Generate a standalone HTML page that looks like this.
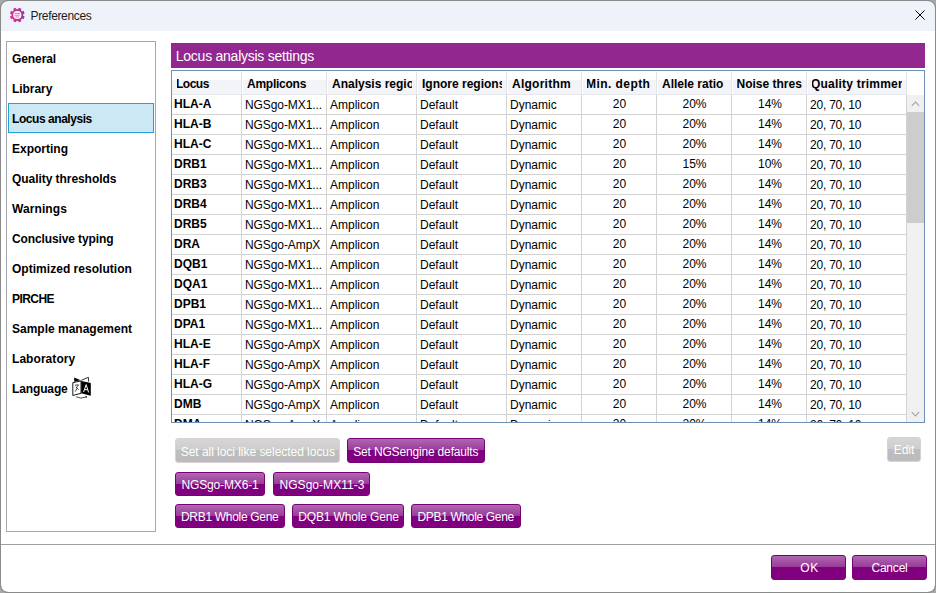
<!DOCTYPE html>
<html><head><meta charset="utf-8"><style>
html,body{margin:0;padding:0;}
body{width:936px;height:593px;position:relative;overflow:hidden;background:#a8a8a8;font-family:"Liberation Sans", sans-serif;}
.win{position:absolute;left:0;top:0;width:936px;height:593px;box-sizing:border-box;border:1px solid #8a8a8a;border-radius:8px;background:#fff;overflow:hidden;}
.abs{position:absolute;box-sizing:border-box;}
.t{position:absolute;white-space:nowrap;font-family:"Liberation Sans", sans-serif;}
.btn{position:absolute;box-sizing:border-box;border:1px solid #780078;border-radius:3px;overflow:hidden;}
</style></head><body>
<div class="win">
</div>
<div class="abs" style="left:0;top:0;width:936px;height:593px;">
<div class="abs" style="left:1px;top:1px;width:934px;height:30px;background:#eef2f9;border-radius:7px 7px 0 0;"></div>
<svg class="abs" style="left:0px;top:0px" width="40" height="31" viewBox="0 0 40 31">
<defs><linearGradient id="g1" gradientUnits="userSpaceOnUse" x1="10" y1="0" x2="25" y2="0"><stop offset="0" stop-color="#e62e96"/><stop offset="0.5" stop-color="#c8309a"/><stop offset="1" stop-color="#8e3c9e"/></linearGradient></defs>
<path d="M17.30 9.10 L18.07 9.15 L18.80 7.65 L21.44 8.75 L20.89 10.32 L21.47 10.83 L21.98 11.41 L23.55 10.86 L24.65 13.50 L23.15 14.23 L23.20 15.00 L23.15 15.77 L24.65 16.50 L23.55 19.14 L21.98 18.59 L21.47 19.17 L20.89 19.68 L21.44 21.25 L18.80 22.35 L18.07 20.85 L17.30 20.90 L16.53 20.85 L15.80 22.35 L13.16 21.25 L13.71 19.68 L13.13 19.17 L12.62 18.59 L11.05 19.14 L9.95 16.50 L11.45 15.77 L11.40 15.00 L11.45 14.23 L9.95 13.50 L11.05 10.86 L12.62 11.41 L13.13 10.83 L13.71 10.32 L13.16 8.75 L15.80 7.65 L16.53 9.15 Z" fill="url(#g1)"/>
<circle cx="17.3" cy="15.0" r="4.1" fill="#fff"/>
<path d="M14.6 13.4 h2.6 M14.6 15.2 h5.2 M15.4 17 h3.6" stroke="#e070b8" stroke-width="1"/>
<path d="M17.6 13.4 h2" stroke="#b04aa8" stroke-width="1"/>
</svg>
<div class="t" style="left:30.6px;top:9px;font-size:12px;line-height:14px;font-weight:400;color:#1c1c1c;letter-spacing:-0.36px;">Preferences</div>
<svg class="abs" style="left:915px;top:10px" width="10" height="10" viewBox="0 0 10 10"><path d="M0.5 0.5L9.5 9.5M9.5 0.5L0.5 9.5" stroke="#000" stroke-width="1"/></svg>
<div class="abs" style="left:6px;top:41px;width:150px;height:491px;border:1px solid #a5a8ae;background:#fff;"></div>
<div class="abs" style="left:8px;top:103px;width:146px;height:30px;border:1px solid #26a0da;background:#cce8f5;"></div>
<div class="t" style="left:12px;top:52px;font-size:12px;line-height:14px;font-weight:700;color:#000;letter-spacing:-0.092px;">General</div>
<div class="t" style="left:12px;top:82px;font-size:12px;line-height:14px;font-weight:700;color:#000;letter-spacing:-0.051px;">Library</div>
<div class="t" style="left:12px;top:112px;font-size:12px;line-height:14px;font-weight:700;color:#000;letter-spacing:-0.443px;">Locus analysis</div>
<div class="t" style="left:12px;top:142px;font-size:12px;line-height:14px;font-weight:700;color:#000;letter-spacing:0.004px;">Exporting</div>
<div class="t" style="left:12px;top:172px;font-size:12px;line-height:14px;font-weight:700;color:#000;letter-spacing:-0.057px;">Quality thresholds</div>
<div class="t" style="left:12px;top:202px;font-size:12px;line-height:14px;font-weight:700;color:#000;letter-spacing:0.093px;">Warnings</div>
<div class="t" style="left:12px;top:232px;font-size:12px;line-height:14px;font-weight:700;color:#000;letter-spacing:-0.114px;">Conclusive typing</div>
<div class="t" style="left:12px;top:262px;font-size:12px;line-height:14px;font-weight:700;color:#000;letter-spacing:0.026px;">Optimized resolution</div>
<div class="t" style="left:12px;top:292px;font-size:12px;line-height:14px;font-weight:700;color:#000;letter-spacing:-0.567px;">PIRCHE</div>
<div class="t" style="left:12px;top:322px;font-size:12px;line-height:14px;font-weight:700;color:#000;letter-spacing:-0.003px;">Sample management</div>
<div class="t" style="left:12px;top:352px;font-size:12px;line-height:14px;font-weight:700;color:#000;letter-spacing:0.055px;">Laboratory</div>
<div class="t" style="left:12px;top:382px;font-size:12px;line-height:14px;font-weight:700;color:#000;letter-spacing:-0.131px;">Language</div>
<svg class="abs" style="left:70px;top:375px" width="24" height="26" viewBox="70 375 24 26">
<path d="M74.2 377.6 L80.6 380.2 L74.2 381.8 Z" fill="#000"/>
<path d="M81.3 380.3 L88.4 377.3 L88.6 381.6" fill="none" stroke="#000" stroke-width="0.8"/>
<path d="M72.8 382.6 L81 380.9 L81 393.3 L72.8 395.5 Z" fill="#fff" stroke="#000" stroke-width="0.9"/>
<path d="M81.2 380.9 L90.8 382.9 L90.8 395.8 L81.2 393.3 Z" fill="#000"/>
<path d="M75 385.2 L78.6 384.8 L76 388.2 M75.8 386.8 L78.8 389.6 M77 388.4 L75.2 391.6" fill="none" stroke="#000" stroke-width="0.7"/>
<path d="M83.6 392 L86.2 384.6 L88.6 392.4 M84.6 389.6 L87.6 389.8" fill="none" stroke="#fff" stroke-width="1"/>
<path d="M76.2 396.8 Q81 399.4 86.4 396.8" fill="none" stroke="#000" stroke-width="0.7"/>
<path d="M85.2 396.4 L87.2 396.2 L86.4 398" fill="#000"/>
</svg>
<div class="abs" style="left:171px;top:43px;width:754px;height:25px;background:#91278f;"></div>
<div class="t" style="left:175.8px;top:48px;font-size:14px;line-height:16px;font-weight:400;color:#fff;letter-spacing:-0.25px;">Locus analysis settings</div>
<div class="abs" style="left:171px;top:70px;width:754px;height:353px;border:1px solid #6d8fb6;background:#fff;overflow:hidden;"></div>
<div class="abs" style="left:172px;top:71px;width:735px;height:9px;background:#fff;"></div>
<div class="abs" style="left:172px;top:80px;width:735px;height:14px;background:#f3f4f7;"></div>
<div class="abs" style="left:172px;top:94px;width:735px;height:1px;background:#e6e7ea;"></div>
<div class="abs" style="left:241px;top:72px;width:1px;height:22px;background:#e2e3e6;"></div>
<div class="abs" style="left:242px;top:72px;width:1px;height:22px;background:#fff;"></div>
<div class="abs" style="left:326px;top:72px;width:1px;height:22px;background:#e2e3e6;"></div>
<div class="abs" style="left:327px;top:72px;width:1px;height:22px;background:#fff;"></div>
<div class="abs" style="left:416px;top:72px;width:1px;height:22px;background:#e2e3e6;"></div>
<div class="abs" style="left:417px;top:72px;width:1px;height:22px;background:#fff;"></div>
<div class="abs" style="left:506px;top:72px;width:1px;height:22px;background:#e2e3e6;"></div>
<div class="abs" style="left:507px;top:72px;width:1px;height:22px;background:#fff;"></div>
<div class="abs" style="left:581px;top:72px;width:1px;height:22px;background:#e2e3e6;"></div>
<div class="abs" style="left:582px;top:72px;width:1px;height:22px;background:#fff;"></div>
<div class="abs" style="left:656px;top:72px;width:1px;height:22px;background:#e2e3e6;"></div>
<div class="abs" style="left:657px;top:72px;width:1px;height:22px;background:#fff;"></div>
<div class="abs" style="left:731px;top:72px;width:1px;height:22px;background:#e2e3e6;"></div>
<div class="abs" style="left:732px;top:72px;width:1px;height:22px;background:#fff;"></div>
<div class="abs" style="left:806px;top:72px;width:1px;height:22px;background:#e2e3e6;"></div>
<div class="abs" style="left:807px;top:72px;width:1px;height:22px;background:#fff;"></div>
<div class="abs" style="left:906px;top:72px;width:1px;height:22px;background:#e2e3e6;"></div>
<div class="abs" style="left:177px;top:71px;width:60px;height:23px;overflow:hidden;"><div class="t" style="left:-1px;top:6px;font-size:12px;line-height:14px;font-weight:700;color:#000;letter-spacing:-0.5px;">Locus</div>
</div>
<div class="abs" style="left:247px;top:71px;width:75px;height:23px;overflow:hidden;"><div class="t" style="left:0px;top:6px;font-size:12px;line-height:14px;font-weight:700;color:#000;letter-spacing:-0.25px;">Amplicons</div>
</div>
<div class="abs" style="left:332px;top:71px;width:80px;height:23px;overflow:hidden;"><div class="t" style="left:0px;top:6px;font-size:12px;line-height:14px;font-weight:700;color:#000;letter-spacing:0px;">Analysis regions</div>
</div>
<div class="abs" style="left:422px;top:71px;width:80px;height:23px;overflow:hidden;"><div class="t" style="left:0px;top:6px;font-size:12px;line-height:14px;font-weight:700;color:#000;letter-spacing:0px;">Ignore regions</div>
</div>
<div class="abs" style="left:512px;top:71px;width:65px;height:23px;overflow:hidden;"><div class="t" style="left:0px;top:6px;font-size:12px;line-height:14px;font-weight:700;color:#000;letter-spacing:0.25px;">Algorithm</div>
</div>
<div class="abs" style="left:587px;top:71px;width:65px;height:23px;overflow:hidden;"><div class="t" style="left:-1px;top:6px;font-size:12px;line-height:14px;font-weight:700;color:#000;letter-spacing:0.44px;">Min. depth</div>
</div>
<div class="abs" style="left:662px;top:71px;width:65px;height:23px;overflow:hidden;"><div class="t" style="left:0px;top:6px;font-size:12px;line-height:14px;font-weight:700;color:#000;letter-spacing:0px;">Allele ratio</div>
</div>
<div class="abs" style="left:737px;top:71px;width:65px;height:23px;overflow:hidden;"><div class="t" style="left:-0.5px;top:6px;font-size:12px;line-height:14px;font-weight:700;color:#000;letter-spacing:0px;">Noise threshold</div>
</div>
<div class="abs" style="left:812px;top:71px;width:90px;height:23px;overflow:hidden;"><div class="t" style="left:-1px;top:6px;font-size:12px;line-height:14px;font-weight:700;color:#000;letter-spacing:0.21px;">Quality trimmer</div>
</div>
<div class="abs" style="left:172px;top:95px;width:735px;height:327px;overflow:hidden;">
<div class="abs" style="left:0;top:19px;width:735px;height:1px;background:#d3d3d3;"></div>
<div class="t" style="left:2px;top:2px;font-size:12px;line-height:14px;font-weight:700;color:#000;">HLA-A</div>
<div class="t" style="left:73px;top:3px;font-size:12px;line-height:14px;font-weight:400;color:#000;letter-spacing:-0.09px;">NGSgo-MX1...</div>
<div class="t" style="left:158px;top:3px;font-size:12px;line-height:14px;font-weight:400;color:#000;">Amplicon</div>
<div class="t" style="left:248px;top:3px;font-size:12px;line-height:14px;font-weight:400;color:#000;">Default</div>
<div class="t" style="left:338px;top:3px;font-size:12px;line-height:14px;font-weight:400;color:#000;">Dynamic</div>
<div class="t" style="left:410.5px;top:2px;width:74px;text-align:center;font-size:12px;line-height:14px;">20</div>
<div class="t" style="left:485.5px;top:2px;width:74px;text-align:center;font-size:12px;line-height:14px;">20%</div>
<div class="t" style="left:561px;top:2px;width:74px;text-align:center;font-size:12px;line-height:14px;">14%</div>
<div class="t" style="left:638px;top:3px;font-size:12px;line-height:14px;font-weight:400;color:#000;letter-spacing:-0.22px;">20, 70, 10</div>
<div class="abs" style="left:0;top:39px;width:735px;height:1px;background:#d3d3d3;"></div>
<div class="t" style="left:2px;top:22px;font-size:12px;line-height:14px;font-weight:700;color:#000;">HLA-B</div>
<div class="t" style="left:73px;top:23px;font-size:12px;line-height:14px;font-weight:400;color:#000;letter-spacing:-0.09px;">NGSgo-MX1...</div>
<div class="t" style="left:158px;top:23px;font-size:12px;line-height:14px;font-weight:400;color:#000;">Amplicon</div>
<div class="t" style="left:248px;top:23px;font-size:12px;line-height:14px;font-weight:400;color:#000;">Default</div>
<div class="t" style="left:338px;top:23px;font-size:12px;line-height:14px;font-weight:400;color:#000;">Dynamic</div>
<div class="t" style="left:410.5px;top:22px;width:74px;text-align:center;font-size:12px;line-height:14px;">20</div>
<div class="t" style="left:485.5px;top:22px;width:74px;text-align:center;font-size:12px;line-height:14px;">20%</div>
<div class="t" style="left:561px;top:22px;width:74px;text-align:center;font-size:12px;line-height:14px;">14%</div>
<div class="t" style="left:638px;top:23px;font-size:12px;line-height:14px;font-weight:400;color:#000;letter-spacing:-0.22px;">20, 70, 10</div>
<div class="abs" style="left:0;top:59px;width:735px;height:1px;background:#d3d3d3;"></div>
<div class="t" style="left:2px;top:42px;font-size:12px;line-height:14px;font-weight:700;color:#000;">HLA-C</div>
<div class="t" style="left:73px;top:43px;font-size:12px;line-height:14px;font-weight:400;color:#000;letter-spacing:-0.09px;">NGSgo-MX1...</div>
<div class="t" style="left:158px;top:43px;font-size:12px;line-height:14px;font-weight:400;color:#000;">Amplicon</div>
<div class="t" style="left:248px;top:43px;font-size:12px;line-height:14px;font-weight:400;color:#000;">Default</div>
<div class="t" style="left:338px;top:43px;font-size:12px;line-height:14px;font-weight:400;color:#000;">Dynamic</div>
<div class="t" style="left:410.5px;top:42px;width:74px;text-align:center;font-size:12px;line-height:14px;">20</div>
<div class="t" style="left:485.5px;top:42px;width:74px;text-align:center;font-size:12px;line-height:14px;">20%</div>
<div class="t" style="left:561px;top:42px;width:74px;text-align:center;font-size:12px;line-height:14px;">14%</div>
<div class="t" style="left:638px;top:43px;font-size:12px;line-height:14px;font-weight:400;color:#000;letter-spacing:-0.22px;">20, 70, 10</div>
<div class="abs" style="left:0;top:79px;width:735px;height:1px;background:#d3d3d3;"></div>
<div class="t" style="left:2px;top:62px;font-size:12px;line-height:14px;font-weight:700;color:#000;">DRB1</div>
<div class="t" style="left:73px;top:63px;font-size:12px;line-height:14px;font-weight:400;color:#000;letter-spacing:-0.09px;">NGSgo-MX1...</div>
<div class="t" style="left:158px;top:63px;font-size:12px;line-height:14px;font-weight:400;color:#000;">Amplicon</div>
<div class="t" style="left:248px;top:63px;font-size:12px;line-height:14px;font-weight:400;color:#000;">Default</div>
<div class="t" style="left:338px;top:63px;font-size:12px;line-height:14px;font-weight:400;color:#000;">Dynamic</div>
<div class="t" style="left:410.5px;top:62px;width:74px;text-align:center;font-size:12px;line-height:14px;">20</div>
<div class="t" style="left:485.5px;top:62px;width:74px;text-align:center;font-size:12px;line-height:14px;">15%</div>
<div class="t" style="left:561px;top:62px;width:74px;text-align:center;font-size:12px;line-height:14px;">10%</div>
<div class="t" style="left:638px;top:63px;font-size:12px;line-height:14px;font-weight:400;color:#000;letter-spacing:-0.22px;">20, 70, 10</div>
<div class="abs" style="left:0;top:99px;width:735px;height:1px;background:#d3d3d3;"></div>
<div class="t" style="left:2px;top:82px;font-size:12px;line-height:14px;font-weight:700;color:#000;">DRB3</div>
<div class="t" style="left:73px;top:83px;font-size:12px;line-height:14px;font-weight:400;color:#000;letter-spacing:-0.09px;">NGSgo-MX1...</div>
<div class="t" style="left:158px;top:83px;font-size:12px;line-height:14px;font-weight:400;color:#000;">Amplicon</div>
<div class="t" style="left:248px;top:83px;font-size:12px;line-height:14px;font-weight:400;color:#000;">Default</div>
<div class="t" style="left:338px;top:83px;font-size:12px;line-height:14px;font-weight:400;color:#000;">Dynamic</div>
<div class="t" style="left:410.5px;top:82px;width:74px;text-align:center;font-size:12px;line-height:14px;">20</div>
<div class="t" style="left:485.5px;top:82px;width:74px;text-align:center;font-size:12px;line-height:14px;">20%</div>
<div class="t" style="left:561px;top:82px;width:74px;text-align:center;font-size:12px;line-height:14px;">14%</div>
<div class="t" style="left:638px;top:83px;font-size:12px;line-height:14px;font-weight:400;color:#000;letter-spacing:-0.22px;">20, 70, 10</div>
<div class="abs" style="left:0;top:119px;width:735px;height:1px;background:#d3d3d3;"></div>
<div class="t" style="left:2px;top:102px;font-size:12px;line-height:14px;font-weight:700;color:#000;">DRB4</div>
<div class="t" style="left:73px;top:103px;font-size:12px;line-height:14px;font-weight:400;color:#000;letter-spacing:-0.09px;">NGSgo-MX1...</div>
<div class="t" style="left:158px;top:103px;font-size:12px;line-height:14px;font-weight:400;color:#000;">Amplicon</div>
<div class="t" style="left:248px;top:103px;font-size:12px;line-height:14px;font-weight:400;color:#000;">Default</div>
<div class="t" style="left:338px;top:103px;font-size:12px;line-height:14px;font-weight:400;color:#000;">Dynamic</div>
<div class="t" style="left:410.5px;top:102px;width:74px;text-align:center;font-size:12px;line-height:14px;">20</div>
<div class="t" style="left:485.5px;top:102px;width:74px;text-align:center;font-size:12px;line-height:14px;">20%</div>
<div class="t" style="left:561px;top:102px;width:74px;text-align:center;font-size:12px;line-height:14px;">14%</div>
<div class="t" style="left:638px;top:103px;font-size:12px;line-height:14px;font-weight:400;color:#000;letter-spacing:-0.22px;">20, 70, 10</div>
<div class="abs" style="left:0;top:139px;width:735px;height:1px;background:#d3d3d3;"></div>
<div class="t" style="left:2px;top:122px;font-size:12px;line-height:14px;font-weight:700;color:#000;">DRB5</div>
<div class="t" style="left:73px;top:123px;font-size:12px;line-height:14px;font-weight:400;color:#000;letter-spacing:-0.09px;">NGSgo-MX1...</div>
<div class="t" style="left:158px;top:123px;font-size:12px;line-height:14px;font-weight:400;color:#000;">Amplicon</div>
<div class="t" style="left:248px;top:123px;font-size:12px;line-height:14px;font-weight:400;color:#000;">Default</div>
<div class="t" style="left:338px;top:123px;font-size:12px;line-height:14px;font-weight:400;color:#000;">Dynamic</div>
<div class="t" style="left:410.5px;top:122px;width:74px;text-align:center;font-size:12px;line-height:14px;">20</div>
<div class="t" style="left:485.5px;top:122px;width:74px;text-align:center;font-size:12px;line-height:14px;">20%</div>
<div class="t" style="left:561px;top:122px;width:74px;text-align:center;font-size:12px;line-height:14px;">14%</div>
<div class="t" style="left:638px;top:123px;font-size:12px;line-height:14px;font-weight:400;color:#000;letter-spacing:-0.22px;">20, 70, 10</div>
<div class="abs" style="left:0;top:159px;width:735px;height:1px;background:#d3d3d3;"></div>
<div class="t" style="left:2px;top:142px;font-size:12px;line-height:14px;font-weight:700;color:#000;">DRA</div>
<div class="t" style="left:73px;top:143px;font-size:12px;line-height:14px;font-weight:400;color:#000;letter-spacing:-0.09px;">NGSgo-AmpX</div>
<div class="t" style="left:158px;top:143px;font-size:12px;line-height:14px;font-weight:400;color:#000;">Amplicon</div>
<div class="t" style="left:248px;top:143px;font-size:12px;line-height:14px;font-weight:400;color:#000;">Default</div>
<div class="t" style="left:338px;top:143px;font-size:12px;line-height:14px;font-weight:400;color:#000;">Dynamic</div>
<div class="t" style="left:410.5px;top:142px;width:74px;text-align:center;font-size:12px;line-height:14px;">20</div>
<div class="t" style="left:485.5px;top:142px;width:74px;text-align:center;font-size:12px;line-height:14px;">20%</div>
<div class="t" style="left:561px;top:142px;width:74px;text-align:center;font-size:12px;line-height:14px;">14%</div>
<div class="t" style="left:638px;top:143px;font-size:12px;line-height:14px;font-weight:400;color:#000;letter-spacing:-0.22px;">20, 70, 10</div>
<div class="abs" style="left:0;top:179px;width:735px;height:1px;background:#d3d3d3;"></div>
<div class="t" style="left:2px;top:162px;font-size:12px;line-height:14px;font-weight:700;color:#000;">DQB1</div>
<div class="t" style="left:73px;top:163px;font-size:12px;line-height:14px;font-weight:400;color:#000;letter-spacing:-0.09px;">NGSgo-MX1...</div>
<div class="t" style="left:158px;top:163px;font-size:12px;line-height:14px;font-weight:400;color:#000;">Amplicon</div>
<div class="t" style="left:248px;top:163px;font-size:12px;line-height:14px;font-weight:400;color:#000;">Default</div>
<div class="t" style="left:338px;top:163px;font-size:12px;line-height:14px;font-weight:400;color:#000;">Dynamic</div>
<div class="t" style="left:410.5px;top:162px;width:74px;text-align:center;font-size:12px;line-height:14px;">20</div>
<div class="t" style="left:485.5px;top:162px;width:74px;text-align:center;font-size:12px;line-height:14px;">20%</div>
<div class="t" style="left:561px;top:162px;width:74px;text-align:center;font-size:12px;line-height:14px;">14%</div>
<div class="t" style="left:638px;top:163px;font-size:12px;line-height:14px;font-weight:400;color:#000;letter-spacing:-0.22px;">20, 70, 10</div>
<div class="abs" style="left:0;top:199px;width:735px;height:1px;background:#d3d3d3;"></div>
<div class="t" style="left:2px;top:182px;font-size:12px;line-height:14px;font-weight:700;color:#000;">DQA1</div>
<div class="t" style="left:73px;top:183px;font-size:12px;line-height:14px;font-weight:400;color:#000;letter-spacing:-0.09px;">NGSgo-MX1...</div>
<div class="t" style="left:158px;top:183px;font-size:12px;line-height:14px;font-weight:400;color:#000;">Amplicon</div>
<div class="t" style="left:248px;top:183px;font-size:12px;line-height:14px;font-weight:400;color:#000;">Default</div>
<div class="t" style="left:338px;top:183px;font-size:12px;line-height:14px;font-weight:400;color:#000;">Dynamic</div>
<div class="t" style="left:410.5px;top:182px;width:74px;text-align:center;font-size:12px;line-height:14px;">20</div>
<div class="t" style="left:485.5px;top:182px;width:74px;text-align:center;font-size:12px;line-height:14px;">20%</div>
<div class="t" style="left:561px;top:182px;width:74px;text-align:center;font-size:12px;line-height:14px;">14%</div>
<div class="t" style="left:638px;top:183px;font-size:12px;line-height:14px;font-weight:400;color:#000;letter-spacing:-0.22px;">20, 70, 10</div>
<div class="abs" style="left:0;top:219px;width:735px;height:1px;background:#d3d3d3;"></div>
<div class="t" style="left:2px;top:202px;font-size:12px;line-height:14px;font-weight:700;color:#000;">DPB1</div>
<div class="t" style="left:73px;top:203px;font-size:12px;line-height:14px;font-weight:400;color:#000;letter-spacing:-0.09px;">NGSgo-MX1...</div>
<div class="t" style="left:158px;top:203px;font-size:12px;line-height:14px;font-weight:400;color:#000;">Amplicon</div>
<div class="t" style="left:248px;top:203px;font-size:12px;line-height:14px;font-weight:400;color:#000;">Default</div>
<div class="t" style="left:338px;top:203px;font-size:12px;line-height:14px;font-weight:400;color:#000;">Dynamic</div>
<div class="t" style="left:410.5px;top:202px;width:74px;text-align:center;font-size:12px;line-height:14px;">20</div>
<div class="t" style="left:485.5px;top:202px;width:74px;text-align:center;font-size:12px;line-height:14px;">20%</div>
<div class="t" style="left:561px;top:202px;width:74px;text-align:center;font-size:12px;line-height:14px;">14%</div>
<div class="t" style="left:638px;top:203px;font-size:12px;line-height:14px;font-weight:400;color:#000;letter-spacing:-0.22px;">20, 70, 10</div>
<div class="abs" style="left:0;top:239px;width:735px;height:1px;background:#d3d3d3;"></div>
<div class="t" style="left:2px;top:222px;font-size:12px;line-height:14px;font-weight:700;color:#000;">DPA1</div>
<div class="t" style="left:73px;top:223px;font-size:12px;line-height:14px;font-weight:400;color:#000;letter-spacing:-0.09px;">NGSgo-MX1...</div>
<div class="t" style="left:158px;top:223px;font-size:12px;line-height:14px;font-weight:400;color:#000;">Amplicon</div>
<div class="t" style="left:248px;top:223px;font-size:12px;line-height:14px;font-weight:400;color:#000;">Default</div>
<div class="t" style="left:338px;top:223px;font-size:12px;line-height:14px;font-weight:400;color:#000;">Dynamic</div>
<div class="t" style="left:410.5px;top:222px;width:74px;text-align:center;font-size:12px;line-height:14px;">20</div>
<div class="t" style="left:485.5px;top:222px;width:74px;text-align:center;font-size:12px;line-height:14px;">20%</div>
<div class="t" style="left:561px;top:222px;width:74px;text-align:center;font-size:12px;line-height:14px;">14%</div>
<div class="t" style="left:638px;top:223px;font-size:12px;line-height:14px;font-weight:400;color:#000;letter-spacing:-0.22px;">20, 70, 10</div>
<div class="abs" style="left:0;top:259px;width:735px;height:1px;background:#d3d3d3;"></div>
<div class="t" style="left:2px;top:242px;font-size:12px;line-height:14px;font-weight:700;color:#000;">HLA-E</div>
<div class="t" style="left:73px;top:243px;font-size:12px;line-height:14px;font-weight:400;color:#000;letter-spacing:-0.09px;">NGSgo-AmpX</div>
<div class="t" style="left:158px;top:243px;font-size:12px;line-height:14px;font-weight:400;color:#000;">Amplicon</div>
<div class="t" style="left:248px;top:243px;font-size:12px;line-height:14px;font-weight:400;color:#000;">Default</div>
<div class="t" style="left:338px;top:243px;font-size:12px;line-height:14px;font-weight:400;color:#000;">Dynamic</div>
<div class="t" style="left:410.5px;top:242px;width:74px;text-align:center;font-size:12px;line-height:14px;">20</div>
<div class="t" style="left:485.5px;top:242px;width:74px;text-align:center;font-size:12px;line-height:14px;">20%</div>
<div class="t" style="left:561px;top:242px;width:74px;text-align:center;font-size:12px;line-height:14px;">14%</div>
<div class="t" style="left:638px;top:243px;font-size:12px;line-height:14px;font-weight:400;color:#000;letter-spacing:-0.22px;">20, 70, 10</div>
<div class="abs" style="left:0;top:279px;width:735px;height:1px;background:#d3d3d3;"></div>
<div class="t" style="left:2px;top:262px;font-size:12px;line-height:14px;font-weight:700;color:#000;">HLA-F</div>
<div class="t" style="left:73px;top:263px;font-size:12px;line-height:14px;font-weight:400;color:#000;letter-spacing:-0.09px;">NGSgo-AmpX</div>
<div class="t" style="left:158px;top:263px;font-size:12px;line-height:14px;font-weight:400;color:#000;">Amplicon</div>
<div class="t" style="left:248px;top:263px;font-size:12px;line-height:14px;font-weight:400;color:#000;">Default</div>
<div class="t" style="left:338px;top:263px;font-size:12px;line-height:14px;font-weight:400;color:#000;">Dynamic</div>
<div class="t" style="left:410.5px;top:262px;width:74px;text-align:center;font-size:12px;line-height:14px;">20</div>
<div class="t" style="left:485.5px;top:262px;width:74px;text-align:center;font-size:12px;line-height:14px;">20%</div>
<div class="t" style="left:561px;top:262px;width:74px;text-align:center;font-size:12px;line-height:14px;">14%</div>
<div class="t" style="left:638px;top:263px;font-size:12px;line-height:14px;font-weight:400;color:#000;letter-spacing:-0.22px;">20, 70, 10</div>
<div class="abs" style="left:0;top:299px;width:735px;height:1px;background:#d3d3d3;"></div>
<div class="t" style="left:2px;top:282px;font-size:12px;line-height:14px;font-weight:700;color:#000;">HLA-G</div>
<div class="t" style="left:73px;top:283px;font-size:12px;line-height:14px;font-weight:400;color:#000;letter-spacing:-0.09px;">NGSgo-AmpX</div>
<div class="t" style="left:158px;top:283px;font-size:12px;line-height:14px;font-weight:400;color:#000;">Amplicon</div>
<div class="t" style="left:248px;top:283px;font-size:12px;line-height:14px;font-weight:400;color:#000;">Default</div>
<div class="t" style="left:338px;top:283px;font-size:12px;line-height:14px;font-weight:400;color:#000;">Dynamic</div>
<div class="t" style="left:410.5px;top:282px;width:74px;text-align:center;font-size:12px;line-height:14px;">20</div>
<div class="t" style="left:485.5px;top:282px;width:74px;text-align:center;font-size:12px;line-height:14px;">20%</div>
<div class="t" style="left:561px;top:282px;width:74px;text-align:center;font-size:12px;line-height:14px;">14%</div>
<div class="t" style="left:638px;top:283px;font-size:12px;line-height:14px;font-weight:400;color:#000;letter-spacing:-0.22px;">20, 70, 10</div>
<div class="abs" style="left:0;top:319px;width:735px;height:1px;background:#d3d3d3;"></div>
<div class="t" style="left:2px;top:302px;font-size:12px;line-height:14px;font-weight:700;color:#000;">DMB</div>
<div class="t" style="left:73px;top:303px;font-size:12px;line-height:14px;font-weight:400;color:#000;letter-spacing:-0.09px;">NGSgo-AmpX</div>
<div class="t" style="left:158px;top:303px;font-size:12px;line-height:14px;font-weight:400;color:#000;">Amplicon</div>
<div class="t" style="left:248px;top:303px;font-size:12px;line-height:14px;font-weight:400;color:#000;">Default</div>
<div class="t" style="left:338px;top:303px;font-size:12px;line-height:14px;font-weight:400;color:#000;">Dynamic</div>
<div class="t" style="left:410.5px;top:302px;width:74px;text-align:center;font-size:12px;line-height:14px;">20</div>
<div class="t" style="left:485.5px;top:302px;width:74px;text-align:center;font-size:12px;line-height:14px;">20%</div>
<div class="t" style="left:561px;top:302px;width:74px;text-align:center;font-size:12px;line-height:14px;">14%</div>
<div class="t" style="left:638px;top:303px;font-size:12px;line-height:14px;font-weight:400;color:#000;letter-spacing:-0.22px;">20, 70, 10</div>
<div class="abs" style="left:0;top:339px;width:735px;height:1px;background:#d3d3d3;"></div>
<div class="t" style="left:2px;top:322px;font-size:12px;line-height:14px;font-weight:700;color:#000;">DMA</div>
<div class="t" style="left:73px;top:323px;font-size:12px;line-height:14px;font-weight:400;color:#000;letter-spacing:-0.09px;">NGSgo-AmpX</div>
<div class="t" style="left:158px;top:323px;font-size:12px;line-height:14px;font-weight:400;color:#000;">Amplicon</div>
<div class="t" style="left:248px;top:323px;font-size:12px;line-height:14px;font-weight:400;color:#000;">Default</div>
<div class="t" style="left:338px;top:323px;font-size:12px;line-height:14px;font-weight:400;color:#000;">Dynamic</div>
<div class="t" style="left:410.5px;top:322px;width:74px;text-align:center;font-size:12px;line-height:14px;">20</div>
<div class="t" style="left:485.5px;top:322px;width:74px;text-align:center;font-size:12px;line-height:14px;">20%</div>
<div class="t" style="left:561px;top:322px;width:74px;text-align:center;font-size:12px;line-height:14px;">14%</div>
<div class="t" style="left:638px;top:323px;font-size:12px;line-height:14px;font-weight:400;color:#000;letter-spacing:-0.22px;">20, 70, 10</div>
<div class="abs" style="left:69px;top:0;width:1px;height:327px;background:#d3d3d3;"></div>
<div class="abs" style="left:154px;top:0;width:1px;height:327px;background:#d3d3d3;"></div>
<div class="abs" style="left:244px;top:0;width:1px;height:327px;background:#d3d3d3;"></div>
<div class="abs" style="left:334px;top:0;width:1px;height:327px;background:#d3d3d3;"></div>
<div class="abs" style="left:409px;top:0;width:1px;height:327px;background:#d3d3d3;"></div>
<div class="abs" style="left:484px;top:0;width:1px;height:327px;background:#d3d3d3;"></div>
<div class="abs" style="left:559px;top:0;width:1px;height:327px;background:#d3d3d3;"></div>
<div class="abs" style="left:634px;top:0;width:1px;height:327px;background:#d3d3d3;"></div>
<div class="abs" style="left:734px;top:0;width:1px;height:327px;background:#d3d3d3;"></div>
</div>
<div class="abs" style="left:907px;top:95px;width:17px;height:327px;background:#f0f0f0;"></div>
<div class="abs" style="left:907px;top:112px;width:17px;height:111px;background:#cdcdcd;"></div>
<svg class="abs" style="left:907px;top:95px" width="17" height="327" viewBox="907 95 17 327"><path d="M911.8 105.8 L915.5 102 L919.2 105.8" fill="none" stroke="#a6a6a6" stroke-width="1.1"/><path d="M911.8 412.2 L915.5 416 L919.2 412.2" fill="none" stroke="#a6a6a6" stroke-width="1.1"/></svg>
<div class="btn" style="left:175px;top:438px;width:165px;height:25px;border-color:#dccfdc;background:linear-gradient(#d6d6d6,#cdcdcd 11px,#bdbdbd 11px,#bcbcbc);"></div>
<div class="t" style="left:180.7px;top:445px;font-size:12px;line-height:14px;font-weight:400;color:#fff;letter-spacing:-0.036px;">Set all loci like selected locus</div>
<div class="btn" style="left:347px;top:438px;width:138px;height:25px;border-color:#780078;background:linear-gradient(#b067b0,#993b99 11px,#800080 11px,#800080);"></div>
<div class="t" style="left:353.2px;top:445px;font-size:12px;line-height:14px;font-weight:400;color:#fff;letter-spacing:-0.164px;">Set NGSengine defaults</div>
<div class="btn" style="left:175px;top:472px;width:90px;height:24px;border-color:#780078;background:linear-gradient(#b067b0,#993b99 11px,#800080 11px,#800080);"></div>
<div class="t" style="left:181.4px;top:478px;font-size:12px;line-height:14px;font-weight:400;color:#fff;letter-spacing:-0.132px;">NGSgo-MX6-1</div>
<div class="btn" style="left:273px;top:472px;width:97px;height:24px;border-color:#780078;background:linear-gradient(#b067b0,#993b99 11px,#800080 11px,#800080);"></div>
<div class="t" style="left:279.5px;top:478px;font-size:12px;line-height:14px;font-weight:400;color:#fff;letter-spacing:0.046px;">NGSgo-MX11-3</div>
<div class="btn" style="left:175px;top:504px;width:110px;height:24px;border-color:#780078;background:linear-gradient(#b067b0,#993b99 11px,#800080 11px,#800080);"></div>
<div class="t" style="left:181.0px;top:510px;font-size:12px;line-height:14px;font-weight:400;color:#fff;letter-spacing:-0.312px;">DRB1 Whole Gene</div>
<div class="btn" style="left:292px;top:504px;width:112px;height:24px;border-color:#780078;background:linear-gradient(#b067b0,#993b99 11px,#800080 11px,#800080);"></div>
<div class="t" style="left:298.3px;top:510px;font-size:12px;line-height:14px;font-weight:400;color:#fff;letter-spacing:-0.153px;">DQB1 Whole Gene</div>
<div class="btn" style="left:411px;top:504px;width:110px;height:24px;border-color:#780078;background:linear-gradient(#b067b0,#993b99 11px,#800080 11px,#800080);"></div>
<div class="t" style="left:417.5px;top:510px;font-size:12px;line-height:14px;font-weight:400;color:#fff;letter-spacing:-0.337px;">DPB1 Whole Gene</div>
<div class="btn" style="left:887px;top:437px;width:34px;height:25px;border-color:#dccfdc;background:linear-gradient(#d6d6d6,#cdcdcd 11px,#bdbdbd 11px,#bcbcbc);"></div>
<div class="t" style="left:887px;top:443px;width:34px;text-align:center;font-size:12px;line-height:14px;color:#fff;letter-spacing:0px;">Edit</div>
<div class="abs" style="left:1px;top:544px;width:934px;height:1px;background:#a0a0a0;"></div>
<div class="btn" style="left:771px;top:555px;width:75px;height:25px;border-color:#780078;background:linear-gradient(#b067b0,#993b99 11px,#800080 11px,#800080);"></div>
<div class="t" style="left:772px;top:561px;width:75px;text-align:center;font-size:12px;line-height:14px;color:#fff;letter-spacing:0.5px;">OK</div>
<div class="btn" style="left:852px;top:555px;width:75px;height:25px;border-color:#780078;background:linear-gradient(#b067b0,#993b99 11px,#800080 11px,#800080);"></div>
<div class="t" style="left:852px;top:561px;width:75px;text-align:center;font-size:12px;line-height:14px;color:#fff;letter-spacing:-0.2px;">Cancel</div>
</div>
<div class="abs" style="left:0;top:0;width:936px;height:593px;border:1px solid #8a8a8a;border-radius:8px;pointer-events:none;"></div>
</body></html>
